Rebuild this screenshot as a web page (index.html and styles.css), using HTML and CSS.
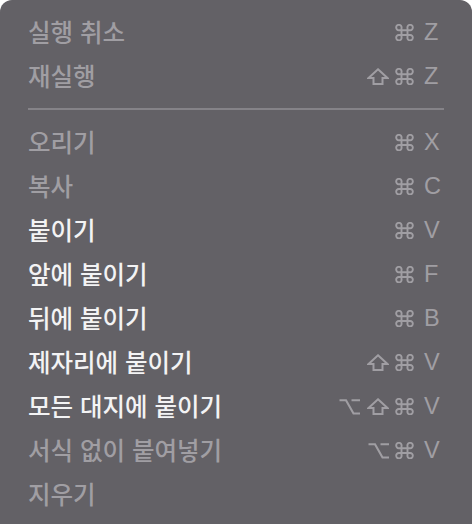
FILE: index.html
```html
<!DOCTYPE html>
<html lang="ko">
<head>
<meta charset="utf-8">
<link rel="stylesheet" href="styles.css">
</head>
<body>
<svg width="0" height="0" class="defs">
  <defs>
    <symbol id="cmd" viewBox="0 0 19 17">
      <path d="M6.5 6.2 H12.5 V11 H6.5 Z M6.5 6.2 V4.2 A2.7 2.7 0 1 0 3.8 6.2 Z M12.5 6.2 V4.2 A2.7 2.7 0 1 1 15.2 6.2 Z M6.5 11 V13 A2.7 2.7 0 1 1 3.8 11 Z M12.5 11 V13 A2.7 2.7 0 1 0 15.2 11 Z" fill="none" stroke="currentColor" stroke-width="1.9" stroke-linejoin="round"/>
    </symbol>
    <symbol id="shift" viewBox="0 0 22 17">
      <path d="M11 1.3 L20.5 10 H15.5 V16 H6.5 V10 H1.5 Z" fill="none" stroke="currentColor" stroke-width="2" stroke-linejoin="miter"/>
    </symbol>
    <symbol id="opt" viewBox="0 0 21 17">
      <path d="M0.5 2.2 H7 L14.5 15.5 H21 M12.5 2.2 H21" fill="none" stroke="currentColor" stroke-width="2.1"/>
    </symbol>
  </defs>
</svg>
<div class="menu">
  <div class="item disabled"><span class="label">실행 취소</span><span class="keys"><span class="mods"><svg class="k-cmd"><use href="#cmd"/></svg></span><span class="key">Z</span></span></div>
  <div class="item disabled"><span class="label">재실행</span><span class="keys"><span class="mods"><svg class="k-shift"><use href="#shift"/></svg><svg class="k-cmd"><use href="#cmd"/></svg></span><span class="key">Z</span></span></div>
  <div class="sep"></div>
  <div class="item disabled"><span class="label">오리기</span><span class="keys"><span class="mods"><svg class="k-cmd"><use href="#cmd"/></svg></span><span class="key">X</span></span></div>
  <div class="item disabled"><span class="label">복사</span><span class="keys"><span class="mods"><svg class="k-cmd"><use href="#cmd"/></svg></span><span class="key">C</span></span></div>
  <div class="item"><span class="label">붙이기</span><span class="keys"><span class="mods"><svg class="k-cmd"><use href="#cmd"/></svg></span><span class="key">V</span></span></div>
  <div class="item"><span class="label">앞에 붙이기</span><span class="keys"><span class="mods"><svg class="k-cmd"><use href="#cmd"/></svg></span><span class="key">F</span></span></div>
  <div class="item"><span class="label">뒤에 붙이기</span><span class="keys"><span class="mods"><svg class="k-cmd"><use href="#cmd"/></svg></span><span class="key">B</span></span></div>
  <div class="item"><span class="label">제자리에 붙이기</span><span class="keys"><span class="mods"><svg class="k-shift"><use href="#shift"/></svg><svg class="k-cmd"><use href="#cmd"/></svg></span><span class="key">V</span></span></div>
  <div class="item"><span class="label">모든 대지에 붙이기</span><span class="keys"><span class="mods"><svg class="k-opt"><use href="#opt"/></svg><svg class="k-shift"><use href="#shift"/></svg><svg class="k-cmd"><use href="#cmd"/></svg></span><span class="key">V</span></span></div>
  <div class="item disabled"><span class="label">서식 없이 붙여넣기</span><span class="keys"><span class="mods"><svg class="k-opt"><use href="#opt"/></svg><svg class="k-cmd"><use href="#cmd"/></svg></span><span class="key">V</span></span></div>
  <div class="item disabled"><span class="label">지우기</span><span class="keys"></span></div>
</div>
</body>
</html>
```
FILE: styles.css
```css
html, body {
  margin: 0;
  padding: 0;
  background: #ffffff;
  overflow: hidden;
  width: 472px;
  height: 524px;
}

.defs {
  position: absolute;
  width: 0;
  height: 0;
}

.menu {
  width: 472px;
  height: 560px;
  background: #636166;
  border-radius: 12px 12px 0 0;
  padding-top: 10px;
  box-sizing: border-box;
  display: flex;
  flex-direction: column;
  font-family: "Noto Sans CJK KR", "Noto Sans", sans-serif;
}

.item {
  height: 44px;
  display: flex;
  align-items: center;
  justify-content: space-between;
  padding: 0 28px 0 28px;
  color: #f3f3f4;
}

.item.disabled .label {
  color: #a09ea3;
}

.label {
  font-size: 24.5px;
  font-weight: 500;
  line-height: 44px;
  white-space: nowrap;
}

.keys {
  display: flex;
  align-items: center;
  gap: 10px;
  color: #a09ea3;
}

.mods {
  display: flex;
  align-items: center;
  gap: 6.5px;
}

.mods svg {
  display: block;
  height: 17px;
  color: #a09ea3;
}

.k-cmd { width: 19px; }
.k-shift { width: 22px; }
.k-opt { width: 21px; }

.key {
  width: 20px;
  font-family: "Liberation Sans", Arial, sans-serif;
  font-size: 23.5px;
  line-height: 44px;
  text-align: left;
}

.sep {
  height: 22px;
  display: flex;
  align-items: center;
  padding: 0 28px;
}

.sep::before {
  content: "";
  flex: 1;
  height: 2px;
  background: #858388;
}
```
